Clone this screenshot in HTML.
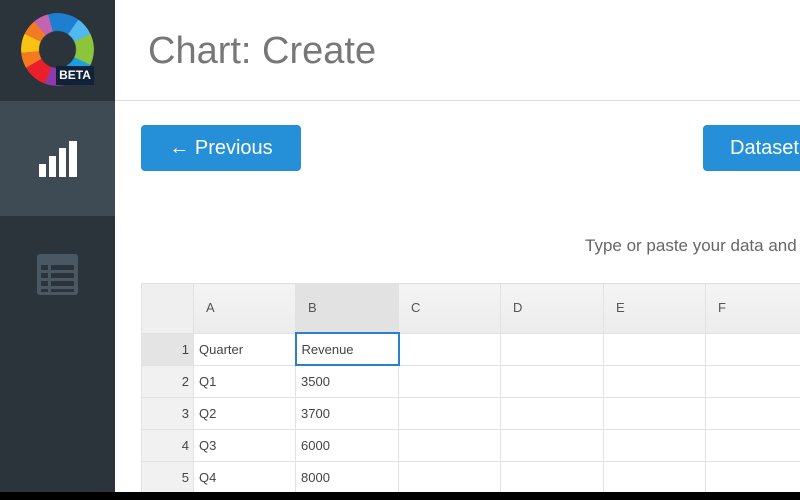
<!DOCTYPE html>
<html><head><style>
*{margin:0;padding:0;box-sizing:border-box}
body{width:800px;height:500px;overflow:hidden;background:#fff;font-family:"Liberation Sans",sans-serif;position:relative}
.sb{position:absolute;left:0;top:0;width:115px;height:500px;background:#2b343b}
.act{position:absolute;left:0;top:101px;width:115px;height:115px;background:#3e4b55}
.ring{position:absolute;left:21px;top:13px;width:73px;height:73px;border-radius:50%;
background:conic-gradient(from 0deg,#1e7fd0 0deg 35deg,#52b9ef 35deg 65deg,#8cc43c 65deg 115deg,#1aa0e0 115deg 150deg,#2a6fc9 150deg 170deg,#8e3aa8 170deg 200deg,#e9202a 200deg 240deg,#f47a20 240deg 265deg,#f9c214 265deg 295deg,#f07b22 295deg 320deg,#c464b0 320deg 345deg,#1e7fd0 345deg 360deg);
-webkit-mask:radial-gradient(circle,transparent 18px,#000 19px);mask:radial-gradient(circle,transparent 18px,#000 19px)}
.beta{position:absolute;left:56px;top:66px;width:38px;height:19px;background:#0f2238;color:#fff;font-size:12px;font-weight:bold;line-height:19px;text-align:center}
.hdr{position:absolute;left:115px;top:0;right:0;height:101px;border-bottom:1px solid #ddd}
h1{position:absolute;left:148px;top:30px;font-weight:normal;font-size:38px;color:#777}
.btn{position:absolute;top:125px;height:46px;background:#2590d7;border-radius:4px;color:#fff;font-size:20px;line-height:46px}
.t{position:absolute;left:585px;top:236px;font-size:17px;color:#666;white-space:nowrap}
table{position:absolute;left:141px;top:283px;border-collapse:collapse;font-size:13px;color:#444;table-layout:fixed;width:825px}
td{border:1px solid #e2e2e2;height:32px;padding:0 5px;vertical-align:middle;white-space:nowrap}
tr.h td{height:49px;background:linear-gradient(#f4f4f4,#ececec);color:#555;padding-left:12px;line-height:48px}
td.n{text-align:right;background:#f1f1f1;padding-right:4px}
.blk{position:absolute;left:0;top:492px;width:800px;height:8px;background:#000}
</style></head><body>
<div class="sb"></div><div class="act"></div>
<div class="ring"></div><div class="beta">BETA</div>
<svg style="position:absolute;left:38px;top:140px" width="40" height="38"><rect x="1" y="24" width="7" height="13" fill="#fff"/><rect x="11" y="16" width="7" height="21" fill="#fff"/><rect x="21" y="8" width="7" height="29" fill="#fff"/><rect x="31" y="1" width="8" height="36" fill="#fff"/></svg>
<svg style="position:absolute;left:37px;top:254px" width="42" height="42"><rect width="41" height="41" rx="3" fill="#4a5863"/><g fill="#2b343b"><rect x="4" y="11" width="7" height="5"/><rect x="14" y="11" width="23" height="5"/><rect x="4" y="19" width="7" height="5"/><rect x="14" y="19" width="23" height="5"/><rect x="4" y="27" width="7" height="5"/><rect x="14" y="27" width="23" height="5"/><rect x="4" y="35" width="7" height="3"/><rect x="14" y="35" width="23" height="3"/></g></svg>
<div class="hdr"></div>
<h1>Chart: Create</h1>
<div class="btn" style="left:141px;width:160px;text-align:center">← Previous</div>
<div class="btn" style="left:703px;width:110px;padding-left:27px">Dataset</div>
<div class="t">Type or paste your data and</div>
<table>
<colgroup><col style="width:52px"><col style="width:102px"><col style="width:103px"><col style="width:102px"><col style="width:103px"><col style="width:102px"><col style="width:103px"><col style="width:158px"></colgroup>
<tr class="h"><td class="n" style="background:#efefef"></td><td>A</td><td style="background:#e2e2e2">B</td><td>C</td><td>D</td><td>E</td><td>F</td><td></td></tr>
<tr><td class="n" style="background:#e4e4e4">1</td><td>Quarter</td><td style="border:2px solid #2a7fd0">Revenue</td><td></td><td></td><td></td><td></td><td></td></tr>
<tr><td class="n">2</td><td>Q1</td><td>3500</td><td></td><td></td><td></td><td></td><td></td></tr>
<tr><td class="n">3</td><td>Q2</td><td>3700</td><td></td><td></td><td></td><td></td><td></td></tr>
<tr><td class="n">4</td><td>Q3</td><td>6000</td><td></td><td></td><td></td><td></td><td></td></tr>
<tr><td class="n">5</td><td>Q4</td><td>8000</td><td></td><td></td><td></td><td></td><td></td></tr>
</table>
<div class="blk"></div>
</body></html>
